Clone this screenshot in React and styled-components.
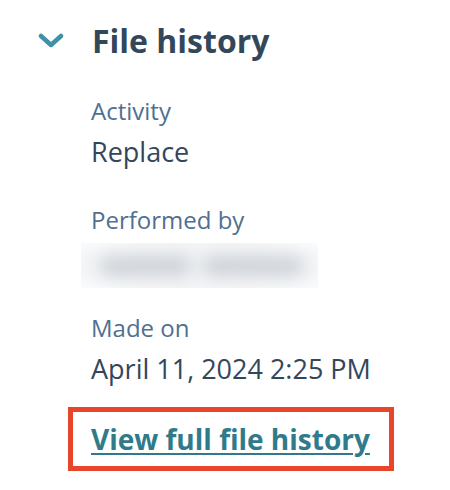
import React from 'react';
import styled, { createGlobalStyle } from 'styled-components';

const GlobalStyle = createGlobalStyle`
  body {
    margin: 0;
    background: #ffffff;
    font-family: "Open Sans", "Liberation Sans", sans-serif;
  }
`;

const Panel = styled.section`
  padding: 21px 0 0 38px;
  width: 450px;
  box-sizing: border-box;
`;

const Header = styled.div`
  display: flex;
  align-items: center;
  gap: 28px;
`;

const Chevron = styled.svg`
  width: 26px;
  height: 16px;
  flex-shrink: 0;
`;

const Title = styled.h2`
  margin: 0;
  font-size: 32px;
  line-height: 40px;
  font-weight: 700;
  color: #33475b;
`;

const Body = styled.div`
  padding-left: 53px;
  display: flex;
  flex-direction: column;
`;

const Field = styled.div`
  display: flex;
  flex-direction: column;
  gap: 8px;
  margin-top: ${(p) => p.$top}px;
`;

const Label = styled.div`
  font-size: 24px;
  line-height: 30px;
  color: #516f90;
`;

const Value = styled.div`
  font-size: 27px;
  line-height: 36px;
  color: #33475b;
  white-space: nowrap;
`;

// redacted name: a soft grey patch with two blurred word blobs
const Redacted = styled.div`
  margin-left: -10px;
  width: 237px;
  height: 45px;
  overflow: hidden;
  display: flex;
  align-items: center;
  gap: 14px;
  padding: 0 14px 0 18px;
  box-sizing: border-box;
  background: radial-gradient(ellipse at center, #eceef1 0%, #f4f5f7 70%, #fafbfc 100%);
`;

const Blob = styled.span`
  flex: ${(p) => p.$grow};
  height: 20px;
  border-radius: 10px;
  background: #cfd4d9;
  filter: blur(8px);
`;

const Highlight = styled.div`
  align-self: flex-start;
  margin: 20px 0 0 -23px;
  border: 5px solid #e8462b;
  padding: 10px 19px 9px 18px;
`;

const Link = styled.a`
  display: block;
  font-size: 28px;
  line-height: 35px;
  font-weight: 700;
  color: #2f7a8b;
  text-decoration: underline;
  text-decoration-thickness: 2px;
  text-underline-offset: 3px;
  white-space: nowrap;
  cursor: pointer;
`;

export default function App() {
  return (
    <>
      <GlobalStyle />
      <Panel>
        <Header>
          <Chevron viewBox="0 0 26 16">
            <path
              d="M3 3 L13 12 L23 3"
              fill="none"
              stroke="#3e91a9"
              strokeWidth="4.5"
              strokeLinecap="round"
              strokeLinejoin="round"
            />
          </Chevron>
          <Title>File history</Title>
        </Header>
        <Body>
          <Field $top={35}>
            <Label>Activity</Label>
            <Value>Replace</Value>
          </Field>
          <Field $top={35}>
            <Label>Performed by</Label>
            <Redacted>
              <Blob $grow={1} />
              <Blob $grow={1.1} />
            </Redacted>
          </Field>
          <Field $top={25}>
            <Label>Made on</Label>
            <Value>April 11, 2024 2:25 PM</Value>
          </Field>
          <Highlight>
            <Link>View full file history</Link>
          </Highlight>
        </Body>
      </Panel>
    </>
  );
}
